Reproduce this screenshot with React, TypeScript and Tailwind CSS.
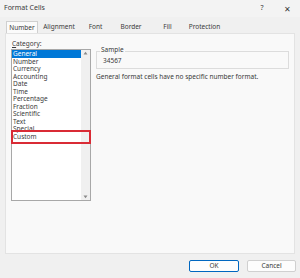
import React from "react";

const cats = [
  "General",
  "Number",
  "Currency",
  "Accounting",
  "Date",
  "Time",
  "Percentage",
  "Fraction",
  "Scientific",
  "Text",
  "Special",
  "Custom",
];

const tabs: { label: string; w: string }[] = [
  { label: "Alignment", w: "w-[42px]" },
  { label: "Font", w: "w-[31px]" },
  { label: "Border", w: "w-[40px]" },
  { label: "Fill", w: "w-[33px]" },
  { label: "Protection", w: "w-[41px]" },
];

export default function App() {
  return (
    <div
      className="w-[300px] h-[278px] bg-[#f0f0f0] flex flex-col text-[#3a3a3a] overflow-hidden"
      style={{ fontFamily: '"Noto Sans", "Open Sans", sans-serif' }}
    >
      {/* title bar */}
      <div className="h-[17px] flex items-center pl-[4px] text-[7px] bg-[#f3f3f3]">
        <span className="flex-1">Format Cells</span>
        <span className="w-[10px] text-center mr-[15px] text-[7px]">?</span>
        <span className="w-[10px] text-center mr-[8px] text-[8px]">✕</span>
      </div>
      {/* tabs */}
      <div className="flex pl-[6px] mt-[4px] h-[12px] text-[6.5px] items-stretch">
        <div className="w-[32px] border border-b-0 border-[#d0d0d0] bg-[#fbfbfb] flex items-center justify-center">
          Number
        </div>
        {tabs.map((t) => (
          <div key={t.label} className={`${t.w} flex items-center justify-center`}>
            {t.label}
          </div>
        ))}
      </div>
      {/* panel */}
      <div className="ml-[5px] w-[290px] h-[221px] bg-[#f9f9f9] border border-[#e3e3e3] flex pl-[5px] pt-[4px] text-[6.5px]">
        <div className="w-[80px] flex flex-col">
          <div className="h-[11px] flex items-center pl-[1px]">
            <span>
              <span className="underline">C</span>ategory:
            </span>
          </div>
          <div className="relative h-[152px] bg-white border border-[#a8a8a8] flex">
            <div className="flex-1 flex flex-col">
              {cats.map((c, i) => (
                <div
                  key={c}
                  className={
                    i === 0
                      ? "h-[7.5px] leading-[7.5px] pl-[1px] bg-[#0078d7] text-white"
                      : "h-[7.5px] leading-[7.5px] pl-[1px]"
                  }
                >
                  {c}
                </div>
              ))}
            </div>
            <div className="w-[9px] bg-[#f0f0f0] flex flex-col justify-between items-center py-[1px]">
              <svg width="5" height="4" viewBox="0 0 5 4">
                <path d="M0.5 3.5 L2.5 0.8 L4.5 3.5 Z" fill="#8a8a8a" />
              </svg>
              <svg width="5" height="4" viewBox="0 0 5 4">
                <path d="M0.5 0.5 L2.5 3.2 L4.5 0.5 Z" fill="#8a8a8a" />
              </svg>
            </div>
            <div className="absolute left-[-1px] top-[80px] w-[80px] h-[14px] border-2 border-[#d92b35]" />
          </div>
        </div>
        <div className="ml-[5px] w-[193px] flex flex-col">
          <div className="relative mt-[13px] h-[18px] border border-[#dcdcdc] flex items-end pl-[6px] pb-[2px]">
            <span className="absolute left-[3px] top-[-6px] px-[1px] bg-[#f9f9f9] leading-[8px]">
              Sample
            </span>
            <span>34567</span>
          </div>
          <div className="mt-[3px]">General format cells have no specific number format.</div>
        </div>
      </div>
      {/* buttons */}
      <div className="flex-1 flex items-center justify-end pr-[4px] gap-[8px] text-[6.5px]">
        <div className="w-[50px] h-[12px] bg-[#fdfdfd] border border-[#0067c0] rounded-[2px] flex items-center justify-center">
          OK
        </div>
        <div className="w-[49px] h-[12px] bg-[#fdfdfd] border border-[#d0d0d0] rounded-[2px] flex items-center justify-center">
          Cancel
        </div>
      </div>
    </div>
  );
}
